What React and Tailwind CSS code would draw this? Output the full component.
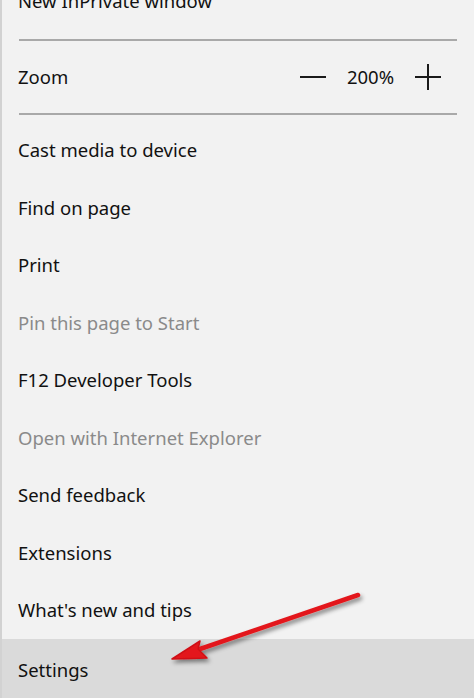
import { useState } from 'react';

const items = [
  { label: 'Cast media to device' },
  { label: 'Find on page' },
  { label: 'Print' },
  { label: 'Pin this page to Start', disabled: true },
  { label: 'F12 Developer Tools' },
  { label: 'Open with Internet Explorer', disabled: true },
  { label: 'Send feedback' },
  { label: 'Extensions' },
  { label: "What's new and tips" },
  { label: 'Settings', active: true },
];

function Divider() {
  return <div className="mx-[17px] h-[2px] bg-[#a9a9a9]" />;
}

function Arrow() {
  // red annotation arrow over the menu
  return (
    <svg className="absolute left-0 top-0 pointer-events-none" width="474" height="698" viewBox="0 0 474 698">
      <defs>
        <filter id="shadow" x="-20%" y="-50%" width="140%" height="200%">
          <feDropShadow dx="2" dy="3" stdDeviation="2" floodColor="#000" floodOpacity="0.45" />
        </filter>
      </defs>
      <g filter="url(#shadow)">
        <line x1="356" y1="595" x2="198" y2="649" stroke="#e3191b" strokeWidth="4.5" strokeLinecap="round" />
        <path d="M170 659 L198 641 L196 649 L205 658 Z" fill="#e3191b" stroke="#d01015" strokeWidth="1.5" strokeLinejoin="round" />
      </g>
    </svg>
  );
}

export default function App() {
  const [zoom, setZoom] = useState(200);

  return (
    <div
      className="relative w-[474px] h-[698px] overflow-hidden bg-[#f2f2f2] border-l-2 border-[#d2d2d2] text-[18.5px] text-[#111]"
      style={{ fontFamily: '"Noto Sans", "Open Sans", sans-serif' }}
    >
      <div className="flex flex-col -mt-[27px]">
        <div className="h-[57px] flex items-center px-4 leading-none">New InPrivate window</div>
        <div className="h-[9px]" />
        <Divider />

        {/* Zoom row */}
        <div className="h-[72px] flex items-center justify-between pl-4 pr-[33px] leading-none">
          <span>Zoom</span>
          <div className="flex items-center gap-[21px]">
            <button onClick={() => setZoom(zoom - 25)} className="w-[26px] h-[26px] flex items-center justify-center">
              <span className="block w-[26px] h-[2px] bg-[#1a1a1a]" />
            </button>
            <span>{zoom}%</span>
            <button onClick={() => setZoom(zoom + 25)} className="relative w-[26px] h-[26px] flex items-center justify-center">
              <span className="block w-[26px] h-[2px] bg-[#1a1a1a]" />
              <span className="absolute left-[12px] top-0 w-[2px] h-[26px] bg-[#1a1a1a]" />
            </button>
          </div>
        </div>
        <Divider />
        <div className="h-[7px]" />

        {items.map((item) => (
          <div
            key={item.label}
            className={`h-[57.44px] flex items-center px-4 leading-none ${
              item.active ? 'bg-[#dadada] h-[62px]' : ''
            } ${item.disabled ? 'text-[#8a8a8a]' : ''}`}
          >
            {item.label}
          </div>
        ))}
      </div>
      <Arrow />
    </div>
  );
}
